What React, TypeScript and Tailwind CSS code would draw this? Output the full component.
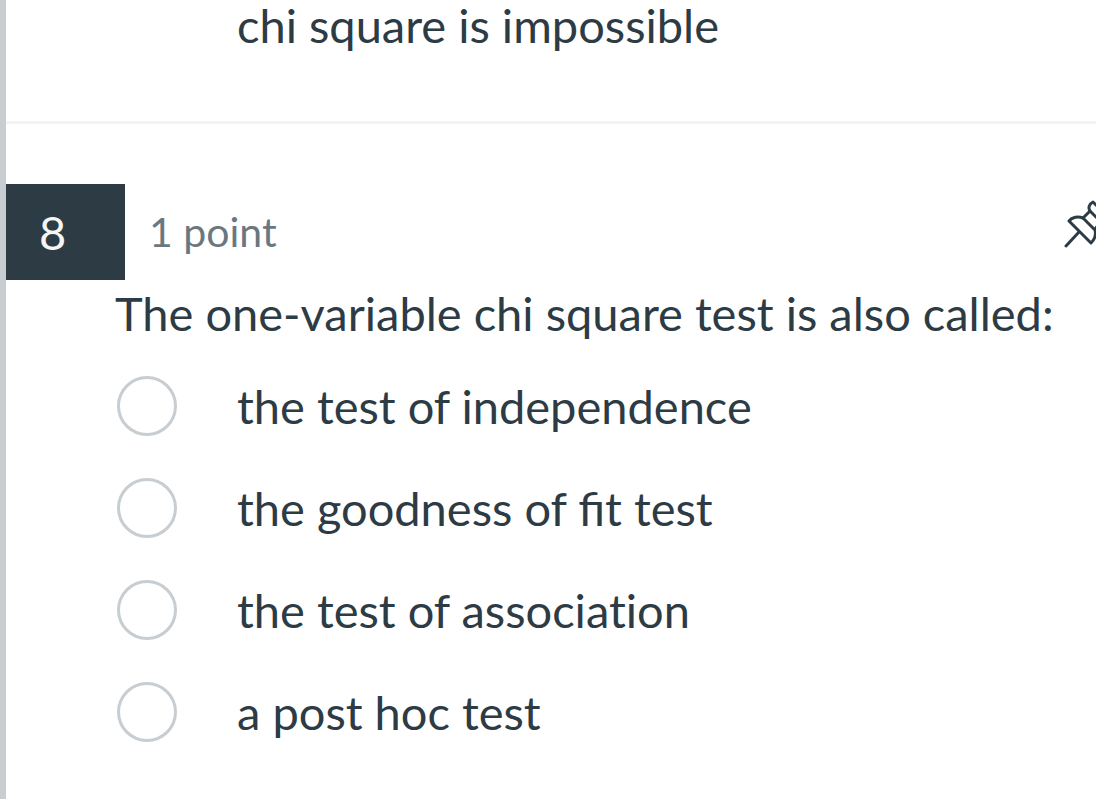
import { useState } from 'react';

const options = [
  'the test of independence',
  'the goodness of fit test',
  'the test of association',
  'a post hoc test',
];

function PinIcon() {
  return (
    <svg
      width="48"
      height="48"
      viewBox="0 0 48 48"
      fill="none"
      stroke="currentColor"
      strokeWidth="3"
      strokeLinecap="round"
      strokeLinejoin="round"
      aria-hidden="true"
    >
      <path d="M2 46 L15 32" />
      <path d="M5 21 L27 43 C31 39 32 34 31 30 L19 18 C14 16 8 17 5 21 Z" />
      <path d="M19 18 L26 11 C24 8 25 4 29 2 L46 19 C44 23 40 24 37 22 L31 29" />
      <path d="M26 11 L37 22" />
    </svg>
  );
}

export default function App() {
  const [answer, setAnswer] = useState<string | null>(null);

  return (
    <main className="min-h-screen overflow-hidden border-l-6 border-[#c7cdd1] bg-white font-['Lato',sans-serif] text-[47px] leading-[50px] text-[#2d3b45]">
      <section className="h-[124px] border-b-3 border-[#f2f3f4]">
        <p className="pl-[231px]">chi square is impossible</p>
      </section>

      <section className="pt-[60px]">
        <header className="flex items-center">
          <h2 className="flex h-24 w-[119px] shrink-0 items-center bg-[#2d3b45] pl-[33px] text-[#f5f5f5]">8</h2>
          <span className="pl-6 text-[41px] text-[#6b7780]">1 point</span>
          <button type="button" aria-label="Pin question" className="-mr-4 -mt-4 ml-auto shrink-0">
            <PinIcon />
          </button>
        </header>

        <fieldset>
          <legend className="whitespace-nowrap pl-[109px] pt-2">
            The one-variable chi square test is also called:
          </legend>
          <div className="flex flex-col gap-[42px] pl-[111px] pt-[38px]">
            {options.map((option) => (
              <label key={option} className="flex h-[60px] items-center gap-[60px]">
                <input
                  type="radio"
                  name="question-8"
                  value={option}
                  checked={answer === option}
                  onChange={() => setAnswer(option)}
                  className="size-[60px] shrink-0 appearance-none rounded-full border-3 border-[#c7cdd1] checked:border-[18px] checked:border-[#2d3b45]"
                />
                <span className={option.endsWith('association') ? '[font-variant-ligatures:none]' : ''}>
                  {option}
                </span>
              </label>
            ))}
          </div>
        </fieldset>
      </section>
    </main>
  );
}
